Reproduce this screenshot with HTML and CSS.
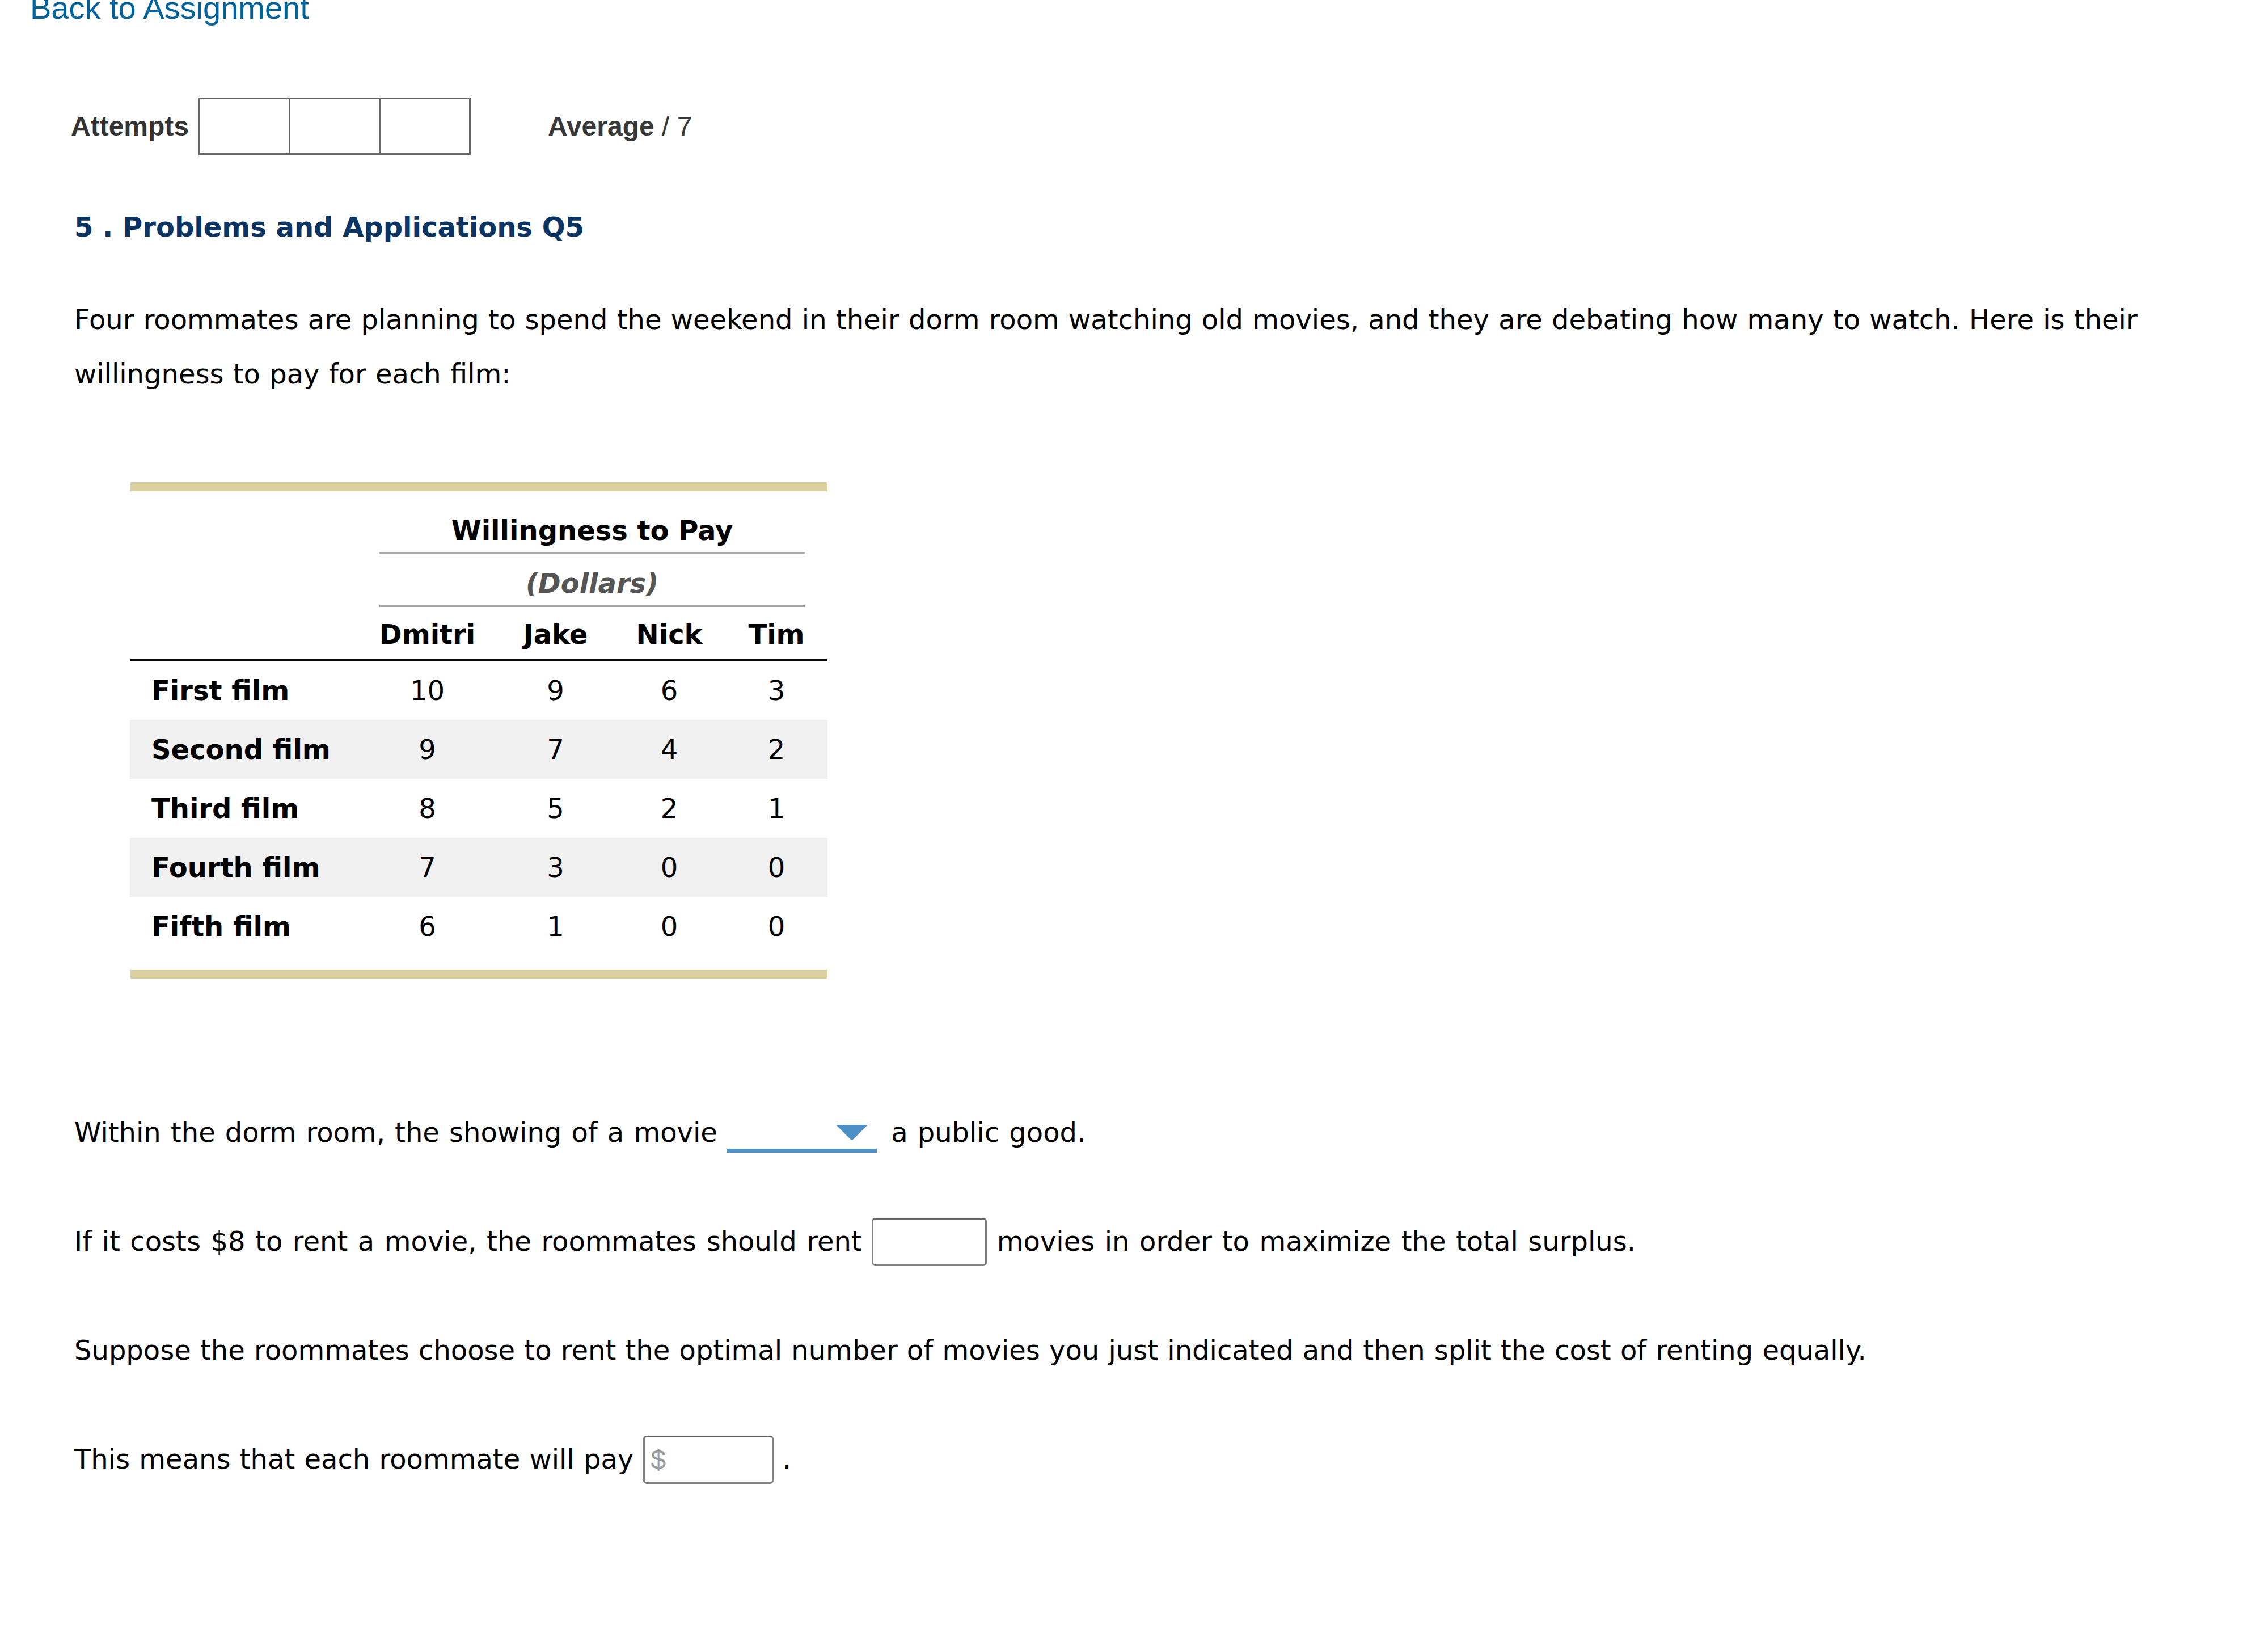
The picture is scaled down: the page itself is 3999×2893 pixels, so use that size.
FILE: index.html
```html
<!DOCTYPE html>
<html lang="en">
<head>
<meta charset="utf-8">
<title>Problems and Applications Q5</title>
<link rel="stylesheet" href="styles.css">
</head>
<body>
<div class="topbar">
  <a class="back-link" href="#">Back to Assignment</a>
</div>

<div class="attempts-bar">
  <span class="attempts-label">Attempts</span>
  <div class="attempt-boxes">
    <span class="attempt-cell"></span>
    <span class="attempt-cell"></span>
    <span class="attempt-cell"></span>
  </div>
  <span class="average"><b>Average</b> / 7</span>
</div>

<main class="question">
  <h2 class="q-title">5 . Problems and Applications Q5</h2>

  <p class="intro">Four roommates are planning to spend the weekend in their dorm room watching old movies, and they are debating how many to watch. Here is their willingness to pay for each film:</p>

  <table class="wtp">
    <colgroup>
      <col class="c-label">
      <col class="c-dmitri">
      <col class="c-jake">
      <col class="c-nick">
      <col class="c-tim">
    </colgroup>
    <thead>
      <tr>
        <td class="blank-head"></td>
        <th class="group-head" colspan="4"><div class="group-title">Willingness to Pay</div></th>
      </tr>
      <tr>
        <td class="blank-head"></td>
        <th class="group-head" colspan="4"><div class="group-unit">(Dollars)</div></th>
      </tr>
      <tr class="names">
        <th></th>
        <th>Dmitri</th>
        <th>Jake</th>
        <th>Nick</th>
        <th>Tim</th>
      </tr>
    </thead>
    <tbody>
      <tr><th>First film</th><td>10</td><td>9</td><td>6</td><td>3</td></tr>
      <tr class="shade"><th>Second film</th><td>9</td><td>7</td><td>4</td><td>2</td></tr>
      <tr><th>Third film</th><td>8</td><td>5</td><td>2</td><td>1</td></tr>
      <tr class="shade"><th>Fourth film</th><td>7</td><td>3</td><td>0</td><td>0</td></tr>
      <tr class="last"><th>Fifth film</th><td>6</td><td>1</td><td>0</td><td>0</td></tr>
    </tbody>
  </table>

  <p class="q-line first-q wide">Within the dorm room, the showing of a movie <span class="dropdown"><svg class="dd-arrow" width="56" height="27" viewBox="0 0 56 27"><polygon points="0,0 56,0 30,26 26,26" fill="#4b8fc6"/></svg></span> a public good.</p>

  <p class="q-line wider">If it costs $8 to rent a movie, the roommates should rent <span class="blank"></span> movies in order to maximize the total surplus.</p>

  <p class="q-line">Suppose the roommates choose to rent the optimal number of movies you just indicated and then split the cost of renting equally.</p>

  <p class="q-line">This means that each roommate will pay <span class="blank money"><span class="placeholder">$</span></span> .</p>
</main>
</body>
</html>
```

FILE: styles.css
```css
html, body {
  margin: 0;
  padding: 0;
  background: #ffffff;
}

body {
  font-family: "DejaVu Sans", Verdana, sans-serif;
  font-size: 48px;
  line-height: 96px;
  color: #000000;
}

/* top link */
.topbar {
  padding-left: 53px;
}

.back-link {
  display: block;
  margin-top: -14px;
  font-family: "Liberation Sans", Arial, sans-serif;
  font-size: 56px;
  line-height: 55px;
  color: #00629b;
  text-decoration: none;
}

/* attempts bar */
.attempts-bar {
  display: flex;
  align-items: center;
  margin-top: 131px;
  padding-left: 125px;
  font-family: "Liberation Sans", Arial, sans-serif;
  font-size: 48px;
  line-height: normal;
  color: #333333;
}

.attempts-label {
  font-weight: bold;
  margin-right: 17px;
}

.attempt-boxes {
  display: flex;
  border: 3px solid #666666;
}

.attempt-cell {
  display: block;
  width: 156px;
  height: 95px;
}

.attempt-cell + .attempt-cell {
  border-left: 3px solid #666666;
}

.average {
  margin-left: 136px;
  color: #383838;
}

/* question */
.question {
  padding: 0 150px 0 131px;
}

.q-title {
  margin: 98px 0 0 0;
  font-size: 48px;
  line-height: 58px;
  font-weight: bold;
  color: #0b3463;
}

.intro {
  margin: 86px 0 0 0;
  word-spacing: 1px;
}

/* table */
.wtp {
  margin: 143px 0 0 98px;
  width: 1230px;
  table-layout: fixed;
  border-collapse: separate;
  border-spacing: 0;
  border-top: 16px solid #dcd0a3;
  border-bottom: 16px solid #dcd0a3;
  font-size: 48px;
  line-height: 58px;
}

.c-label { width: 400px; }
.c-dmitri { width: 249px; }
.c-jake { width: 203px; }
.c-nick { width: 198px; }
.c-tim { width: 180px; }

.wtp th,
.wtp td {
  padding: 0;
  vertical-align: top;
}

.group-head {
  padding: 0 40px !important;
  text-align: center;
}

.group-title {
  padding: 40px 0 10px 0;
  border-bottom: 3px solid #aaaaaa;
  font-weight: bold;
}

.group-unit {
  padding: 22px 0 10px 0;
  border-bottom: 3px solid #aaaaaa;
  font-weight: bold;
  font-style: italic;
  color: #555555;
}

.names th {
  padding: 19px 0 15px 0;
  border-bottom: 3px solid #000000;
  text-align: center;
  font-weight: bold;
}

.wtp tbody th,
.wtp tbody td {
  padding-top: 23px;
  padding-bottom: 23px;
}

.wtp tbody th {
  padding-left: 38px;
  text-align: left;
  font-weight: bold;
}

.wtp tbody td {
  text-align: center;
}

.wtp tbody tr.shade th,
.wtp tbody tr.shade td {
  background: #f0f0f0;
}

.wtp tbody tr.last th,
.wtp tbody tr.last td {
  padding-bottom: 48px;
}

/* question lines */
.q-line {
  margin: 96px 0 0 0;
  word-spacing: 1px;
}

.q-line.wide {
  word-spacing: 1.9px;
}

.q-line.wider {
  word-spacing: 2.3px;
}

.q-line.first-q {
  margin-top: 222px;
}

.dropdown {
  display: inline-block;
  overflow: hidden;
  box-sizing: border-box;
  width: 264px;
  height: 49px;
  padding-right: 16px;
  margin-right: 8px;
  border-bottom: 7px solid #4b8fc6;
  vertical-align: -19px;
  word-spacing: 0;
}

.dd-arrow {
  display: block;
  margin-left: auto;
}

.blank {
  display: inline-block;
  overflow: hidden;
  box-sizing: border-box;
  width: 203px;
  height: 85px;
  border: 3px solid #808080;
  border-top-color: #666666;
  border-radius: 6px;
  vertical-align: -27px;
  background: #ffffff;
}

.blank.money {
  width: 230px;
}

.placeholder {
  display: block;
  padding-left: 11px;
  font-family: "Liberation Sans", Arial, sans-serif;
  font-size: 48px;
  line-height: 79px;
  color: #999999;
}
```
